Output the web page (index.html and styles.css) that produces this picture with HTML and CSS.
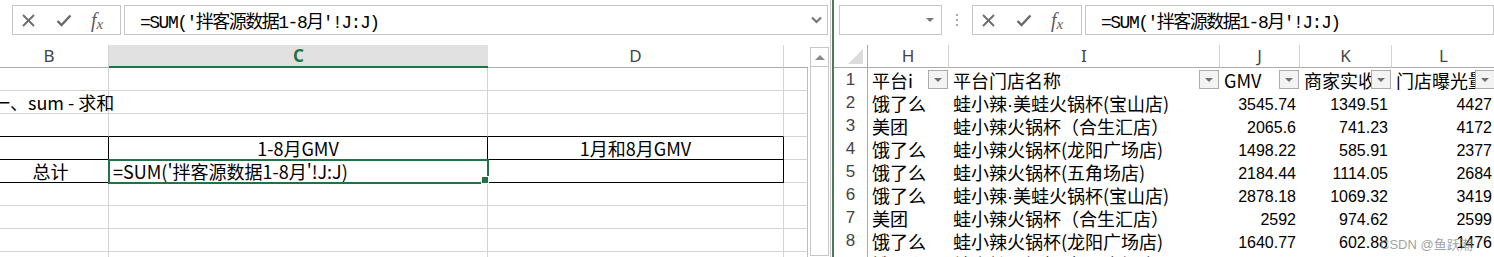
FILE: index.html
```html
<!DOCTYPE html>
<html lang="zh">
<head>
	<meta charset="UTF-8">
	<title>拌客源数据</title>
	<link rel="stylesheet" href="styles.css">
</head>
<body>
<div class="wrap">
	<!-- left window -->
	<div class="pane left">
		<div class="fbar">
			<div class="btns">
				<svg class="ico-x" width="13" height="13" viewBox="0 0 13 13"><path d="M1 1L12 12M12 1L1 12"/></svg>
				<svg class="ico-ok" width="16" height="13" viewBox="0 0 16 13"><path d="M1.5 7L5.5 11L14.5 1.5"/></svg>
				<span class="fx">f<span>x</span></span>
			</div>
			<div class="formula">
				<span class="ftxt">=SUM('拌客源数据1-8月'!J:J)</span>
				<svg class="chev" width="11" height="8" viewBox="0 0 11 8"><path d="M1 1.5L5.5 6L10 1.5"/></svg>
			</div>
		</div>
		<div class="lbody">
			<div class="sheet">
				<div class="hd b">B</div>
				<div class="hd sel">C</div>
				<div class="hd d">D</div>
				<div class="hd e"></div>

				<div class="c b"></div><div class="c"></div><div class="c"></div><div class="c e"></div>

				<div class="c b"><span class="title">一、sum - 求和</span></div><div class="c"></div><div class="c"></div><div class="c e"></div>

				<div class="c b bb"></div><div class="c bb"></div><div class="c bb"></div><div class="c e"></div>

				<div class="c b bb br"></div>
				<div class="c bb br mid">1-8月GMV</div>
				<div class="c bb br mid">1月和8月GMV</div>
				<div class="c e"></div>

				<div class="c b bb br mid">总计</div>
				<div class="c bb br cur">=SUM('拌客源数据1-8月'!J:J)</div>
				<div class="c bb br"></div>
				<div class="c e"></div>

				<div class="c b"></div><div class="c"></div><div class="c"></div><div class="c e"></div>
				<div class="c b"></div><div class="c"></div><div class="c"></div><div class="c e"></div>
				<div class="c b"></div><div class="c"></div><div class="c"></div><div class="c e"></div>
				<div class="c b"></div><div class="c"></div><div class="c"></div><div class="c e"></div>
			</div>
			<div class="vscroll">
				<div class="up"><span></span></div>
				<div class="thumb"></div>
			</div>
		</div>
	</div>

	<div class="split"></div>

	<!-- right window -->
	<div class="pane right">
		<div class="fbar">
			<div class="namebox"><span class="tri"></span></div>
			<div class="dots"><i></i><i></i><i></i></div>
			<div class="btns">
				<svg class="ico-x" width="13" height="13" viewBox="0 0 13 13"><path d="M1 1L12 12M12 1L1 12"/></svg>
				<svg class="ico-ok" width="16" height="13" viewBox="0 0 16 13"><path d="M1.5 7L5.5 11L14.5 1.5"/></svg>
				<span class="fx">f<span>x</span></span>
			</div>
			<div class="formula">
				<span class="ftxt">=SUM('拌客源数据1-8月'!J:J)</span>
			</div>
		</div>
		<div class="rbody">
			<div class="rh corner"><span class="sa"></span></div>
			<div class="rh">H</div>
			<div class="rh">I</div>
			<div class="rh">J</div>
			<div class="rh">K</div>
			<div class="rh">L</div>

			<div class="rn">1</div>
			<div class="fh"><span class="lab">平台i</span><span class="flt"></span></div>
			<div class="fh"><span class="lab">平台门店名称</span><span class="flt"></span></div>
			<div class="fh"><span class="lab">GMV</span><span class="flt"></span></div>
			<div class="fh"><span class="lab">商家实收</span><span class="flt"></span></div>
			<div class="fh"><span class="lab">门店曝光量</span><span class="flt"></span></div>

			<div class="rn">2</div><div class="t">饿了么</div><div class="t">蛙小辣<span class="dot">·</span>美蛙火锅杯(宝山店)</div><div class="n">3545.74</div><div class="n">1349.51</div><div class="n">4427</div>
			<div class="rn">3</div><div class="t">美团</div><div class="t">蛙小辣火锅杯（合生汇店）</div><div class="n">2065.6</div><div class="n">741.23</div><div class="n">4172</div>
			<div class="rn">4</div><div class="t">饿了么</div><div class="t">蛙小辣火锅杯(龙阳广场店)</div><div class="n">1498.22</div><div class="n">585.91</div><div class="n">2377</div>
			<div class="rn">5</div><div class="t">饿了么</div><div class="t">蛙小辣火锅杯(五角场店)</div><div class="n">2184.44</div><div class="n">1114.05</div><div class="n">2684</div>
			<div class="rn">6</div><div class="t">饿了么</div><div class="t">蛙小辣<span class="dot">·</span>美蛙火锅杯(宝山店)</div><div class="n">2878.18</div><div class="n">1069.32</div><div class="n">3419</div>
			<div class="rn">7</div><div class="t">美团</div><div class="t">蛙小辣火锅杯（合生汇店）</div><div class="n">2592</div><div class="n">974.62</div><div class="n">2599</div>
			<div class="rn">8</div><div class="t">饿了么</div><div class="t">蛙小辣火锅杯(龙阳广场店)</div><div class="n">1640.77</div><div class="n">602.88</div><div class="n">1476</div>
			<div class="rn">9</div><div class="t">饿了么</div><div class="t">蛙小辣火锅杯(龙阳广场店)</div><div class="n"></div><div class="n"></div><div class="n"></div>
		</div>
	</div>
</div>
<div class="mark">CSDN @鱼跃潮</div>
</body>
</html>
```

FILE: styles.css
```css
* {
	margin: 0;
	padding: 0;
	box-sizing: border-box;
}

body {
	width: 1494px;
	height: 257px;
	overflow: hidden;
	position: relative;
	background: #fff;
	color: #000;
	font-family: "Noto Sans CJK SC", sans-serif;
}

.wrap {
	display: flex;
	height: 257px;
}

.pane {
	overflow: hidden;
}

.left {
	width: 830px;
	flex: none;
}

.split {
	width: 4px;
	flex: none;
	border-left: 1px solid #c6c6c6;
	border-right: 2px solid #4a7a5a;
}

.right {
	flex: 1;
	min-width: 0;
}

/* formula bar */
.fbar {
	height: 45px;
	padding-top: 5px;
	display: flex;
	align-items: flex-start;
}

.btns {
	width: 109px;
	height: 30px;
	flex: none;
	border: 1px solid #c6c6c6;
	display: flex;
	align-items: center;
	padding-left: 9px;
	gap: 21px;
}
.left .btns { margin-left: 12px; }
.right .btns { width: 110px; }

.btns svg path {
	fill: none;
	stroke: #6b6b6b;
}
.ico-x path { stroke-width: 1.8; }
.ico-ok path { stroke-width: 2.4; }

.fx {
	font: italic 20px "Liberation Serif", serif;
	color: #5e5e5e;
	line-height: 1;
	margin-left: -2px;
}
.fx span {
	font-size: 15px;
	position: relative;
	top: 2px;
}

.formula {
	height: 30px;
	margin-left: 3px;
	border: 1px solid #c6c6c6;
	padding-left: 15px;
	display: flex;
	align-items: center;
	font: 18px "Liberation Mono", "Noto Sans CJK SC", monospace;
	letter-spacing: -1.5px;
	white-space: nowrap;
}
.left .formula { width: 704px; padding-right: 5px; }
.right .formula { flex: 1; }
.ftxt { flex: 1; }

.chev path {
	fill: none;
	stroke: #777;
	stroke-width: 2.2;
}

.namebox {
	width: 103px;
	height: 30px;
	flex: none;
	margin-left: 5px;
	border: 1px solid #c6c6c6;
	display: flex;
	align-items: center;
	justify-content: flex-end;
	padding-right: 7px;
}
.tri {
	width: 0;
	height: 0;
	border-left: 4px solid transparent;
	border-right: 4px solid transparent;
	border-top: 4px solid #777;
}

.dots {
	width: 30px;
	height: 30px;
	flex: none;
	display: flex;
	flex-direction: column;
	align-items: center;
	justify-content: center;
	gap: 3px;
}
.dots i {
	width: 2px;
	height: 2px;
	background: #a8a8a8;
}

/* left sheet */
.lbody {
	display: flex;
}

.sheet {
	width: 808px;
	flex: none;
	display: grid;
	grid-template-columns: 109px 379px 296px 24px;
	grid-auto-rows: 23px;
}

.hd {
	border-bottom: 1px solid #ababab;
	font: 17px "Noto Sans", sans-serif;
	color: #444;
	line-height: 22px;
	text-align: center;
}
.hd.b {
	padding-right: 10px;
	border-right: 1px solid #d4d4d4;
}
.hd.sel {
	background: #e1e1e1;
	border-bottom: 2px solid #217346;
	color: #217346;
	font-weight: bold;
}
.hd.d { border-right: 1px solid #d4d4d4; }

.c {
	border-right: 1px solid #d4d4d4;
	border-bottom: 1px solid #d4d4d4;
	padding: 0 3px;
	font-size: 18px;
	line-height: 22px;
	white-space: nowrap;
}
.c.b { padding-right: 10px; }
.c.e { border-right-color: #bdbdbd; }
.c.mid { text-align: center; }
.c.bb { border-bottom-color: #000; }
.c.br { border-right-color: #000; }

.title {
	margin-left: -11px;
}

.cur {
	position: relative;
	z-index: 1;
	padding-left: 4px;
	outline: 2px solid #217346;
	outline-offset: -1px;
}
.cur::after {
	content: "";
	position: absolute;
	right: -2px;
	bottom: -2px;
	width: 6px;
	height: 6px;
	background: #217346;
	border: 1px solid #fff;
}

.vscroll {
	width: 19px;
	margin-left: 2px;
	padding-top: 2px;
}
.vscroll .up {
	height: 20px;
	border: 1px solid #c6c6c6;
	display: flex;
	align-items: center;
	justify-content: center;
}
.vscroll .up span {
	width: 0;
	height: 0;
	border-left: 5px solid transparent;
	border-right: 5px solid transparent;
	border-bottom: 5px solid #8a8a8a;
}
.vscroll .thumb {
	height: 189px;
	border: 1px solid #c6c6c6;
	border-top: none;
}

/* right sheet */
.rbody {
	display: grid;
	grid-template-columns: 34px 81px 271px 80px 92px 104px;
	grid-auto-rows: 23px;
}

.rh {
	border-right: 1px solid #d4d4d4;
	border-bottom: 1px solid #ababab;
	font: 17px "Noto Sans", sans-serif;
	color: #444;
	line-height: 22px;
	text-align: center;
}
.corner {
	display: flex;
	justify-content: flex-end;
	align-items: flex-end;
	padding: 0 4px 3px 0;
	border-right-color: #ababab;
}
.sa {
	width: 0;
	height: 0;
	border-left: 15px solid transparent;
	border-bottom: 15px solid #dcdcdc;
}

.rn {
	border-right: 1px solid #ababab;
	font: 17px "Liberation Sans", sans-serif;
	color: #444;
	line-height: 22px;
	text-align: center;
	padding-top: 1px;
}

.fh {
	display: flex;
	align-items: center;
	padding: 0 1px 0 4px;
	font-size: 18px;
	line-height: 22px;
}
.fh .lab {
	flex: 1;
	min-width: 0;
	overflow: hidden;
	white-space: nowrap;
}
.flt {
	width: 20px;
	height: 19px;
	flex: none;
	border: 1px solid #ababab;
	background: #f3f3f3;
	display: flex;
	align-items: center;
	justify-content: center;
}
.flt::after {
	content: "";
	border-left: 4px solid transparent;
	border-right: 4px solid transparent;
	border-top: 4px solid #707070;
}

.t {
	padding-left: 4px;
	font-size: 18px;
	line-height: 22px;
	padding-top: 1px;
	white-space: nowrap;
	overflow: hidden;
}
.t .dot {
	font-family: "Liberation Sans", sans-serif;
}

.n {
	padding: 3px 4px 0 0;
	font: 16px "Liberation Sans", sans-serif;
	line-height: 22px;
	text-align: right;
}

.mark {
	position: absolute;
	left: 1380px;
	top: 234px;
	font: 13px "Liberation Sans", "Noto Sans CJK SC", sans-serif;
	color: rgba(130, 130, 130, 0.75);
}
```
